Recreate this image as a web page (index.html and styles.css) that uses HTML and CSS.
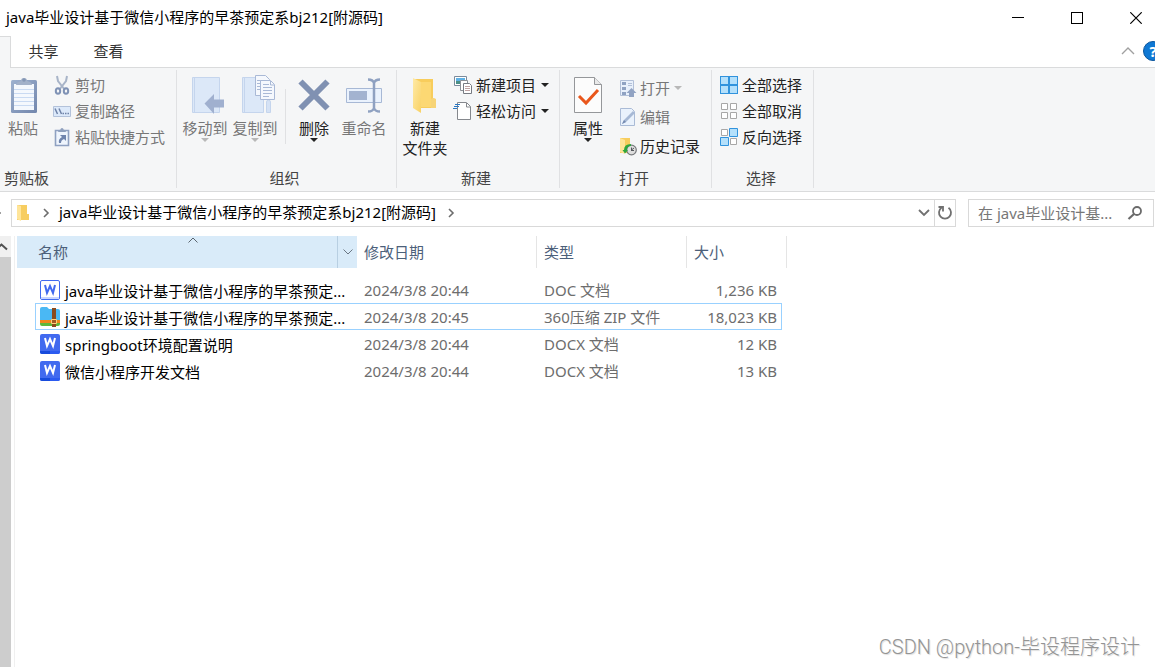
FILE: index.html
```html
<!DOCTYPE html>
<html lang="zh-CN">
<head>
<meta charset="utf-8">
<title>java毕业设计基于微信小程序的早茶预定系bj212[附源码]</title>
<link rel="stylesheet" href="styles.css">
</head>
<body>
<div class="window">
  <header class="titlebar">
    <h1 class="title">java毕业设计基于微信小程序的早茶预定系bj212[附源码]</h1>
    <div class="window-controls">
      <button class="window-button" aria-label="最小化"><svg width="12" height="12" viewBox="0 0 12 12" shape-rendering="crispEdges"><path d="M0 5.5h12" stroke="#000"/></svg></button>
      <button class="window-button" aria-label="最大化"><svg width="12" height="12" viewBox="0 0 12 12" shape-rendering="crispEdges"><path d="M.5.5h11v11H.5z" fill="none" stroke="#000"/></svg></button>
      <button class="window-button" aria-label="关闭"><svg width="12" height="12" viewBox="0 0 12 12"><path d="M.3.3l11.4 11.4M11.7.3L.3 11.7" stroke="#000" stroke-width="1.2"/></svg></button>
    </div>
  </header>

  <nav class="tabs">
    <span class="tab-active"></span>
    <button class="tab">共享</button>
    <button class="tab">查看</button>
    <div class="tabs-end">
      <button class="plain" aria-label="折叠功能区"><svg width="14" height="8" viewBox="0 0 14 8"><path d="M1 7l6-6 6 6" fill="none" stroke="#a0a0a0" stroke-width="1.4"/></svg></button>
      <button class="help" aria-label="帮助">?</button>
    </div>
  </nav>

  <section class="ribbon">
    <div class="group group-clipboard">
      <div class="group-body">
        <button class="big disabled">
          <svg class="big-icon" width="38" height="38" viewBox="0 0 38 38"><defs><linearGradient id="board" x2="1" y2="1"><stop stop-color="#9db1cf"/><stop offset="1" stop-color="#7387ad"/></linearGradient></defs><rect x="7" y="4" width="26" height="33" rx="1.5" fill="url(#board)"/><path d="M10 8h20v26H10z" fill="#f4f8fd"/><path d="M10 13.500h20m-20 4h20m-20 4h20m-20 4h20m-20 4h20" stroke="#c9daf2"/><path d="M12 9q0-3 5-4a3 3 0 0 1 6 0q5 1 5 4z" fill="#a2b1c9"/><circle cx="20" cy="4" r="1.800" fill="#8496b4"/></svg>
          <span>粘贴</span>
        </button>
        <div class="stack">
          <button class="small disabled"><svg width="20" height="20" viewBox="0 0 20 20"><path d="M5 1l1 5 7 9M15 1l-1 5-7 9" fill="none" stroke="#a8b4c8" stroke-width="2"/><ellipse cx="6" cy="16" rx="2.200" ry="2.800" fill="none" stroke="#7f92b5" stroke-width="2"/><ellipse cx="14" cy="16" rx="2.200" ry="2.800" fill="none" stroke="#7f92b5" stroke-width="2"/></svg><span>剪切</span></button>
          <button class="small disabled"><svg width="20" height="20" viewBox="0 0 20 20"><path d="M1.500 5.500h17v10h-17z" fill="#dce9fa" stroke="#b3c2da"/><path d="M3 7.500l2.500 5.500M7 7.500l2.500 5.500" stroke="#6f83a8" stroke-width="1.500"/><path d="M10.500 12.500h1.500m1 0h1.500m1 0H17" stroke="#6f83a8" stroke-width="1.500"/></svg><span>复制路径</span></button>
          <button class="small disabled"><svg width="20" height="20" viewBox="0 0 20 20"><path d="M3.500 3.500h13v15h-13z" fill="#eff5fd" stroke="#8fa1c1" stroke-width="1.600"/><path d="M6 5q0-2 2.500-2.500a1.500 1.500 0 0 1 3 0Q14 3 14 5z" fill="#8fa0bd"/><path d="M8 8h6v6l-2-2q-3 1-3 4H7q-1-4 3-6z" fill="#7085ad"/></svg><span>粘贴快捷方式</span></button>
        </div>
      </div>
      <h2 class="group-label">剪贴板</h2>
    </div>

    <div class="group group-organize">
      <div class="group-body">
        <button class="big disabled">
          <svg class="big-icon" width="38" height="38" viewBox="0 0 38 38"><path d="M6.500 1.500h27v35h-27z" fill="#dce8f8" stroke="#c5d5ed"/><path d="M8.500 2v34" stroke="#c5d5ed"/><path d="M18.500 27.500L28 18v5.500h10v8H28V38z" fill="#a0b0cf"/></svg>
          <span>移动到</span><i class="caret"></i>
        </button>
        <button class="big disabled">
          <svg class="big-icon" width="38" height="38" viewBox="0 0 38 38"><path d="M6.500 1.500h21v35h-21z" fill="#dce8f8" stroke="#c5d5ed"/><path d="M8.500 2v34" stroke="#c5d5ed"/><path d="M30.500 36.500V26q0-2 2-2t2 2v10.500z" fill="#d5e2f5" stroke="#c5d5ed"/><path d="M19.500-.500h10l4 4v16h-14z" fill="#f5f8fd" stroke="#a9b9d6"/><path d="M21 4.500h9M21 7.500h10M21 10.500h10M21 13.500h10" stroke="#a9b9d6"/><path d="M24.500 4.500h10l4 4v15h-14z" fill="#f5f8fd" stroke="#a9b9d6"/><path d="M34.500 5v4H38M27 8.500h6M27 11.500h9M27 14.500h9M27 17.500h9M27 20.500h6" fill="none" stroke="#a9b9d6"/></svg>
          <span>复制到</span><i class="caret"></i>
        </button>
        <span class="divider"></span>
        <button class="big">
          <svg class="big-icon" width="38" height="38" viewBox="0 0 38 38"><path d="M5.500 5.500l27 27m0-27l-27 27" stroke="#8091b2" stroke-width="6"/></svg>
          <span>删除</span><i class="caret"></i>
        </button>
        <button class="big disabled">
          <svg class="big-icon" width="38" height="38" viewBox="0 0 38 38"><path d="M1.500 12.500h35v14h-35z" fill="#eaf2fd" stroke="#a7b8d5"/><path d="M4 15h18v9H4z" fill="#a3b3d0"/><path d="M29 6v27M23 3.500q5 0 6 3.500 1-3.500 6-3.500M23 35.500q5 0 6-3.500 1 3.500 6 3.500" fill="none" stroke="#8fa1c1" stroke-width="2.500"/></svg>
          <span>重命名</span>
        </button>
      </div>
      <h2 class="group-label">组织</h2>
    </div>

    <div class="group group-new">
      <div class="group-body">
        <button class="big">
          <svg class="big-icon" width="38" height="38" viewBox="0 0 38 38"><defs><linearGradient id="folder" x2="1" y2="1"><stop stop-color="#ffeaa6"/><stop offset="1" stop-color="#f9d265"/></linearGradient></defs><path d="M8 3h19v20h3v9H8z" fill="#f8cd5c"/><path d="M25 23q2-2 5 0v9h-5z" fill="#f7d477"/><path d="M7 2l8 4v31l-8-5z" fill="url(#folder)"/><path d="M15 6h10v25H15z" fill="#fcd873"/></svg>
          <span>新建<br>文件夹</span>
        </button>
        <div class="stack">
          <button class="small"><svg width="20" height="20" viewBox="0 0 20 20"><path d="M1.500 1.500h12v9h-12z" fill="#fff" stroke="#7b8b9c"/><path d="M3 3h9v3H3z" fill="#5fb1e5"/><path d="M3 6h9v3H3z" fill="#4b8f86"/><path d="M7.500 5.500h7v10h-7z" fill="#fff" stroke="#8d9197"/><path d="M10.500 8.500h6l2 2v8h-8z" fill="#fff" stroke="#777b82"/><path d="M12 11.500h5m-5 2h5m-5 2h5" stroke="#c0a4a4"/></svg><span>新建项目</span><i class="caret"></i></button>
          <button class="small"><svg width="20" height="20" viewBox="0 0 20 20"><path d="M4.500 1.500h9l4 4v13h-13z" fill="#fff" stroke="#85888d"/><path d="M13.500 2v4h4" fill="none" stroke="#85888d"/><path d="M2 3.500h5M1 5.500h5M0 7.500h4" stroke="#2c78c2" stroke-width="1.200"/></svg><span>轻松访问</span><i class="caret"></i></button>
        </div>
      </div>
      <h2 class="group-label">新建</h2>
    </div>

    <div class="group group-open">
      <div class="group-body">
        <button class="big">
          <svg class="big-icon" width="38" height="38" viewBox="0 0 38 38"><path d="M5.500 1.500h20l7 7v28h-27z" fill="#fcfcfc" stroke="#95979a"/><path d="M25.500 1.500v7h7" fill="#e9e9e9" stroke="#95979a"/><path d="M10 20l7 7 12-13" fill="none" stroke="#e9571c" stroke-width="3"/></svg>
          <span>属性</span><i class="caret"></i>
        </button>
        <div class="stack">
          <button class="small disabled"><svg width="20" height="20" viewBox="0 0 20 20"><path d="M2.500 2.500h13v15h-13z" fill="#e8f0fb" stroke="#b2c0d8"/><path d="M4 4h4v3H4zm0 5h4v3H4zm0 5h4v3H4z" fill="#8fa2c2"/><path d="M10 5.500h4M10 7.500h4" stroke="#b2c0d8"/><path d="M13.500 10l5 5H16v4h-5v-4H8.500z" fill="#91a3c3"/></svg><span>打开</span><i class="caret"></i></button>
          <button class="small disabled"><svg width="20" height="20" viewBox="0 0 20 20"><path d="M2.500 1.500h11l3 3v14h-14z" fill="#eaf2fc" stroke="#aabbd6"/><path d="M4 17l2-4L15 4l2 2-9 9z" fill="#a7b9d5"/><path d="M4 17l4-2-2-2z" fill="#748ab0"/></svg><span>编辑</span></button>
          <button class="small"><svg width="20" height="20" viewBox="0 0 20 20"><path d="M2 2h10v15H2z" fill="#f7cd5e"/><path d="M2 2l5 2v14l-5-2z" fill="#ffe497"/><circle cx="13.500" cy="14" r="4.800" fill="#dedede" stroke="#77797c" stroke-width="1.200"/><path d="M13.500 14l2.500-2m-2.500 2v-2.500M13 14.500h3" stroke="#55585c"/><path d="M13 8Q6 8 6 14H4.500l2.500 3.500L10 14H9q0-4 4-4z" fill="#2fa63d"/></svg><span>历史记录</span></button>
        </div>
      </div>
      <h2 class="group-label">打开</h2>
    </div>

    <div class="group group-select">
      <div class="group-body">
        <div class="stack">
          <button class="small"><svg width="20" height="20" viewBox="0 0 20 20"><path d="M1 1h18v18H1z" fill="#3193dd"/><path d="M2 2h7v7H2zm9 0h7v7h-7zm-9 9h7v7H2zm9 0h7v7h-7z" fill="#b4e0fb"/></svg><span>全部选择</span></button>
          <button class="small"><svg width="20" height="20" viewBox="0 0 20 20"><path d="M2.500 2.500h6v6h-6zm9 0h6v6h-6zm-9 9h6v6h-6zm9 0h6v6h-6z" fill="#fff" stroke="#a7a7a7"/></svg><span>全部取消</span></button>
          <button class="small"><svg width="20" height="20" viewBox="0 0 20 20"><path d="M2.500 2.500h6v6h-6zm9 9h6v6h-6z" fill="#fff" stroke="#a7a7a7"/><path d="M10.500 1.500h8v8h-8zm-9 9h8v8h-8z" fill="#b4e0fb" stroke="#3193dd"/></svg><span>反向选择</span></button>
        </div>
      </div>
      <h2 class="group-label">选择</h2>
    </div>
  </section>

  <div class="location">
    <span class="nav-edge"></span>
    <div class="address">
      <svg width="16" height="18" viewBox="0 0 16 18"><path d="M2 1h10v9h2v6H2z" fill="#f7cd60"/><path d="M2 1l4 1v15l-4-2z" fill="#ffe59a"/></svg>
      <svg class="crumb-arrow" width="7" height="10" viewBox="0 0 7 10"><path d="M1 1l4 4-4 4" fill="none" stroke="#6d6d6d" stroke-width="1.600"/></svg>
      <button class="crumb">java毕业设计基于微信小程序的早茶预定系bj212[附源码]</button>
      <svg class="crumb-arrow" width="7" height="10" viewBox="0 0 7 10"><path d="M1 1l4 4-4 4" fill="none" stroke="#6d6d6d" stroke-width="1.600"/></svg>
      <button class="plain address-drop" aria-label="以前的位置"><svg width="12" height="8" viewBox="0 0 12 8"><path d="M1 1l5 5 5-5" fill="none" stroke="#707070" stroke-width="1.800"/></svg></button>
      <button class="plain refresh" aria-label="刷新"><svg width="16" height="16" viewBox="0 0 16 16"><path d="M11.500 2.800a6 6 0 1 1-7 0" fill="none" stroke="#707070" stroke-width="1.800"/><path d="M1.500 2H6v4.500" fill="none" stroke="#707070" stroke-width="1.800"/></svg></button>
    </div>
    <div class="search">
      <input class="search-input" type="text" aria-label="搜索" placeholder="在 java毕业设计基...">
      <svg width="16" height="16" viewBox="0 0 16 16"><circle cx="10" cy="6" r="4" fill="none" stroke="#6b6b6b" stroke-width="1.800"/><path d="M7 9l-5.500 5" stroke="#6b6b6b" stroke-width="2.200"/></svg>
    </div>
  </div>

  <main class="content">
    <div class="scrollbar">
      <button class="plain scroll-up" aria-label="向上滚动"><svg width="11" height="8" viewBox="0 0 11 8"><path d="M-4 6.500L1.500 1.500 7 6.500" fill="none" stroke="#505050" stroke-width="2"/></svg></button>
    </div>
    <table class="files">
      <thead>
        <tr>
          <th class="name-head" scope="col" aria-sort="ascending"><span>名称</span>
            <svg class="sort" width="10" height="6" viewBox="0 0 10 6"><path d="M.5 5.500L5 1l4.500 4.500" fill="none" stroke="#5c6670"/></svg>
            <button class="plain filter" aria-label="筛选名称"><svg width="10" height="6" viewBox="0 0 10 6"><path d="M.5.500L5 5 9.500.500" fill="none" stroke="#6b7783"/></svg></button></th>
          <th scope="col">修改日期</th>
          <th scope="col">类型</th>
          <th scope="col">大小</th>
        </tr>
      </thead>
      <tbody>
        <tr>
          <td class="name"><svg width="20" height="20" viewBox="0 0 20 20"><rect x=".5" y=".5" width="19" height="19" rx="1.500" fill="#fff" stroke="#416aef"/><path d="M1 17h18v2H1z" fill="#c7d5ff"/><path d="M5 5l2 8 3-7 3 7 2-8" fill="none" stroke="#416aef" stroke-width="2"/></svg><span>java毕业设计基于微信小程序的早茶预定...</span></td>
          <td>2024/3/8 20:44</td><td>DOC 文档</td><td class="size">1,236 KB</td>
        </tr>
        <tr class="focused">
          <td class="name"><svg width="20" height="20" viewBox="0 0 20 20"><path d="M0 2q0-2 2-2h5l2 2h9q2 0 2 2v10H0z" fill="#4ab8f4"/><path d="M0 13h20v3H0z" fill="#ef861d"/><path d="M0 16h20v1q0 2-2 2H2q-2 0-2-2z" fill="#5cb83c"/><path d="M12 1h4v19h-4z" fill="#8a4a1d"/><path d="M11.500 12.500h5v4h-5z" fill="#a55b24" stroke="#ffd17c"/></svg><span>java毕业设计基于微信小程序的早茶预定...</span></td>
          <td>2024/3/8 20:45</td><td>360压缩 ZIP 文件</td><td class="size">18,023 KB</td>
        </tr>
        <tr>
          <td class="name"><svg width="20" height="20" viewBox="0 0 20 20"><rect width="20" height="20" rx="2" fill="#416aef"/><path d="M0 17h10v3H2q-2 0-2-2z" fill="#174bdc"/><path d="M10 17h10v1q0 2-2 2h-8z" fill="#2c5bf0"/><path d="M5 4l2 8 3-7 3 7 2-8" fill="none" stroke="#fff" stroke-width="2"/></svg><span>springboot环境配置说明</span></td>
          <td>2024/3/8 20:44</td><td>DOCX 文档</td><td class="size">12 KB</td>
        </tr>
        <tr>
          <td class="name"><svg width="20" height="20" viewBox="0 0 20 20"><rect width="20" height="20" rx="2" fill="#416aef"/><path d="M0 17h10v3H2q-2 0-2-2z" fill="#174bdc"/><path d="M10 17h10v1q0 2-2 2h-8z" fill="#2c5bf0"/><path d="M5 4l2 8 3-7 3 7 2-8" fill="none" stroke="#fff" stroke-width="2"/></svg><span>微信小程序开发文档</span></td>
          <td>2024/3/8 20:44</td><td>DOCX 文档</td><td class="size">13 KB</td>
        </tr>
      </tbody>
    </table>
  </main>
  <p class="watermark">CSDN @python-毕设程序设计</p>
</div>
</body>
</html>
```
FILE: styles.css
```css
* {
  box-sizing: border-box;
}

body {
  margin: 0;
  background: #fff;
  color: #000;
  font: 15px/20px "Noto Sans", "Noto Sans CJK SC", sans-serif;
}

button {
  margin: 0;
  padding: 0;
  border: 0;
  background: none;
  color: inherit;
  font: inherit;
}

svg {
  display: block;
  flex: none;
}

.window {
  position: relative;
  display: flex;
  flex-direction: column;
  min-height: 100vh;
  overflow: hidden;
}

/* Title bar */
.titlebar {
  display: flex;
  justify-content: space-between;
  align-items: center;
  height: 36px;
  padding: 0 13px 0 6px;
}

.title {
  margin: 0;
  padding-bottom: 2px;
  font-size: 15px;
  font-weight: 400;
  white-space: nowrap;
}

.window-controls {
  display: flex;
  gap: 47px;
}

.window-button {
  width: 12px;
  height: 14px;
}

/* Ribbon tabs */
.tabs {
  display: flex;
  height: 32px;
  background: linear-gradient(#dadbdc, #dadbdc) bottom / 100% 1px no-repeat;
  color: #333;
}

.tab-active {
  width: 11px;
  border: solid #dadbdc;
  border-width: 1px 1px 0 0;
  background: #f5f6f7;
}

.tab {
  width: 65px;
  padding-bottom: 2px;
  white-space: nowrap;
}

.tabs-end {
  display: flex;
  align-items: center;
  gap: 8px;
  margin: 0 -8px 2px auto;
}

.help {
  width: 20px;
  height: 20px;
  border: 1px solid #0b559c;
  border-radius: 50%;
  background: #0f78d4;
  color: #fff;
  font-weight: 700;
  line-height: 18px;
}

/* Ribbon */
.ribbon {
  display: flex;
  height: 124px;
  padding: 2px 0 3px;
  border-bottom: 1px solid #dadbdc;
  background: #f5f6f7;
  color: #222;
}

.group {
  display: flex;
  flex-direction: column;
  justify-content: space-between;
  border-right: 1px solid #e0e1e3;
}

.group-clipboard {
  width: 177px;
  padding-left: 4px;
}

.group-organize {
  width: 220px;
  padding-left: 3px;
}

.group-new {
  width: 163px;
  padding-left: 3px;
}

.group-open {
  width: 152px;
  padding-left: 4px;
}

.group-select {
  width: 102px;
  padding-left: 7px;
}

.group-body {
  display: flex;
  align-items: flex-start;
}

.group-label {
  margin: 0;
  padding-right: 7px;
  color: #444;
  font-size: 15px;
  font-weight: 400;
  text-align: center;
}

.group-clipboard .group-label {
  text-align: left;
}

.group-select .group-label {
  padding-right: 10px;
}

.big {
  display: flex;
  flex-direction: column;
  align-items: center;
  width: 50px;
  padding-top: 6px;
}

.big-icon {
  margin-bottom: 4px;
  overflow: visible;
}

.group-clipboard .big {
  width: 38px;
}

.group-open .big {
  width: 48px;
}

.disabled {
  color: #777;
}

.caret {
  border: 4px solid transparent;
  border-top-color: #222;
  border-bottom: 0;
}

.disabled .caret {
  border-top-color: #b8b8b8;
}

.divider {
  width: 1px;
  height: 55px;
  margin: 19px 3px 0 5px;
  background: #e0e1e3;
}

.stack {
  display: flex;
  flex-direction: column;
  align-items: flex-start;
  padding-top: 2px;
}

.group-clipboard .stack {
  padding-left: 10px;
}

.group-new .stack {
  padding-left: 3px;
}

.group-open .stack {
  padding: 3px 0 0 6px;
}

.small {
  display: flex;
  align-items: center;
  gap: 3px;
  height: 26px;
  white-space: nowrap;
}

.group-open .small {
  gap: 2px;
  height: 29px;
}

.small .caret {
  margin-left: 2px;
}

/* Address and search */
.location {
  display: flex;
  align-items: flex-start;
  padding: 7px 1px 9px 0;
}

.nav-edge {
  align-self: center;
  width: 1px;
  height: 2px;
  margin-right: 10px;
  background: #a0a0a0;
}

.address {
  display: flex;
  flex: 1;
  align-items: center;
  height: 28px;
  margin-right: 12px;
  padding-left: 3px;
  border: 1px solid #d9d9d9;
}

.crumb-arrow {
  margin: 0 9px 0 12px;
}

.crumb {
  padding-bottom: 2px;
  white-space: nowrap;
}

.plain {
  display: flex;
  align-items: center;
  justify-content: center;
}

.address-drop {
  width: 20px;
  height: 100%;
  margin-left: auto;
}

.refresh {
  width: 21px;
  height: 100%;
  border-left: 1px solid #d9d9d9;
}

.search {
  display: flex;
  align-items: center;
  width: 186px;
  height: 28px;
  padding: 0 10px 0 9px;
  border: 1px solid #d9d9d9;
}

.search-input {
  flex: 1;
  min-width: 0;
  padding: 0;
  border: 0;
  outline: 0;
  background: none;
  color: #222;
  font: inherit;
}

.search-input::placeholder {
  color: #777;
  opacity: 1;
}

/* File list */
.content {
  display: flex;
  flex: 1;
  align-items: stretch;
}

.scrollbar {
  width: 15px;
  margin-right: 2px;
  border-right: 1px solid #f0f0f0;
  background: linear-gradient(#cdcdcd, #cdcdcd) left / 11px 100% no-repeat;
}

.scroll-up {
  width: 11px;
  height: 21px;
  background: #f0f0f0;
}

.files {
  display: block;
  width: 770px;
}

.files thead,
.files tbody {
  display: block;
}

.files tr {
  display: grid;
  grid-template-columns: 340px 180px 150px 100px;
}

.files th {
  height: 32px;
  padding: 6px 7px;
  border-right: 1px solid #e5e5e5;
  color: #4c607a;
  font-weight: 400;
  text-align: left;
}

.files .name-head {
  position: relative;
  display: flex;
  justify-content: space-between;
  padding: 0 0 0 21px;
  border: 0;
  background: #d9ebf9;
  line-height: 32px;
}

.sort {
  position: absolute;
  top: 1px;
  left: 171px;
}

.filter {
  width: 20px;
  border-left: 1px solid #b8cfe2;
}

.files tbody {
  padding: 8px 5px 0 18px;
}

.files tbody tr {
  grid-template-columns: 322px 180px 150px 95px;
  height: 27px;
}

.files .focused {
  box-shadow: inset 0 0 0 1px #99d1ff;
}

.files td {
  padding: 4px 5px 3px 7px;
  color: #6d6d6d;
  white-space: nowrap;
}

.files .name {
  display: flex;
  align-items: center;
  gap: 5px;
  padding-left: 5px;
  color: #000;
}

.name svg {
  margin-bottom: 2px;
}

.files .size {
  text-align: right;
}

.watermark {
  position: absolute;
  right: 15px;
  bottom: 6px;
  margin: 0;
  color: #949494;
  font: 300 20px/28px Roboto, "Noto Sans CJK SC", sans-serif;
  text-shadow: 1px 1px 1px #ddd;
}
```
